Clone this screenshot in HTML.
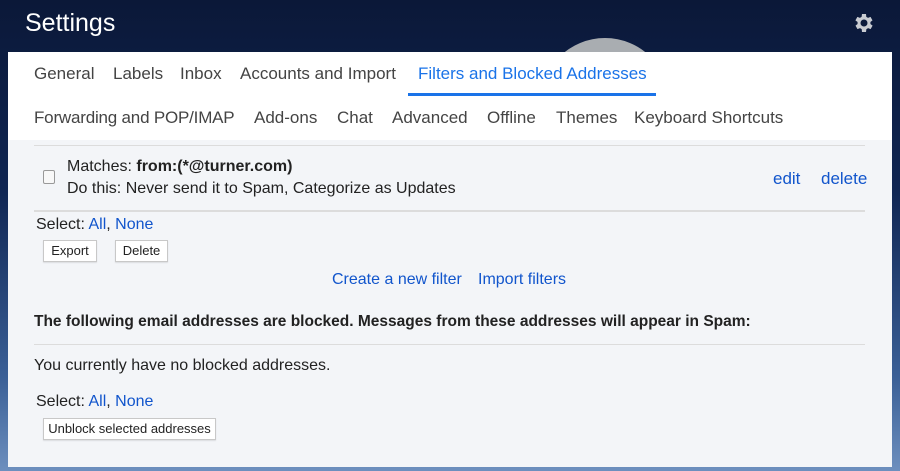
<!DOCTYPE html>
<html><head><meta charset="utf-8"><style>
*{margin:0;padding:0;box-sizing:border-box}
body{width:900px;height:471px;overflow:hidden;position:relative;font-family:"Liberation Sans",sans-serif;
background:linear-gradient(180deg,#0b1838 0%,#0f2552 40%,#3a5f96 80%,#6d8fbe 100%);}
.title{position:absolute;left:25px;top:9px;color:#fff;font-size:25px;}
.moon{position:absolute;left:540px;top:38px;width:130px;height:130px;border-radius:50%;background:#a9adb1;}
.gear{position:absolute;left:851px;top:11px;}
.panel{position:absolute;left:8px;top:52px;width:884px;height:415px;background:#f3f5f8;}
.tabs{position:absolute;left:0;top:0;width:884px;height:88px;background:#fff;}
.t{position:absolute;font-size:17px;color:#444;white-space:nowrap}
.blue{color:#1a73e8}
.line{position:absolute;height:1px;background:#dcdcdc;left:26px;width:831px}
.btn{position:absolute;border:1px solid #c8c8c8;background:#fff;font-size:13px;color:#222;text-align:center;line-height:20px;height:22px;box-shadow:0 1px 1px rgba(0,0,0,.1)}
.s{position:absolute;font-size:16px;color:#222;white-space:nowrap}
.lk,.s.lk{color:#1155cc}
</style></head><body>
<div class="title">Settings</div>
<div class="moon"></div>
<svg class="gear" width="24" height="24" viewBox="0 0 24 24"><path fill="#c9ccd2" d="M19.4 13a7.5 7.5 0 0 0 0-2l2.1-1.6-2-3.5-2.5 1a7.6 7.6 0 0 0-1.7-1L15 3h-4l-.4 2.9a7.6 7.6 0 0 0-1.7 1l-2.5-1-2 3.5L6.6 11a7.5 7.5 0 0 0 0 2l-2.1 1.6 2 3.5 2.5-1a7.6 7.6 0 0 0 1.7 1L11 21h4l.4-2.9a7.6 7.6 0 0 0 1.7-1l2.5 1 2-3.5zM13 15.5a3.5 3.5 0 1 1 0-7 3.5 3.5 0 0 1 0 7z"/></svg>
<div class="panel">
 <div class="tabs">
  <div class="t" style="left:26px;top:12px">General</div>
  <div class="t" style="left:105px;top:12px">Labels</div>
  <div class="t" style="left:172px;top:12px">Inbox</div>
  <div class="t" style="left:232px;top:12px">Accounts and Import</div>
  <div class="t blue" style="left:410px;top:12px">Filters and Blocked Addresses</div>
  <div style="position:absolute;left:400px;top:41px;width:248px;height:3px;background:#1a73e8"></div>
  <div class="t" style="left:26px;top:56px;letter-spacing:-0.2px">Forwarding and POP/IMAP</div>
  <div class="t" style="left:246px;top:56px">Add-ons</div>
  <div class="t" style="left:329px;top:56px">Chat</div>
  <div class="t" style="left:384px;top:56px">Advanced</div>
  <div class="t" style="left:479px;top:56px">Offline</div>
  <div class="t" style="left:548px;top:56px">Themes</div>
  <div class="t" style="left:626px;top:56px">Keyboard Shortcuts</div>
 </div>
 <div class="line" style="top:93px"></div>
 <div style="position:absolute;left:35px;top:118px;width:12px;height:14px;border:1px solid #999;border-radius:2px;background:#f8f8f8"></div>
 <div class="s" style="left:59px;top:106px">Matches: <b>from:(*@turner.com)</b></div>
 <div class="s" style="left:59px;top:128px">Do this: Never send it to Spam, Categorize as Updates</div>
 <div class="s lk" style="left:765px;top:117px;font-size:17px">edit</div>
 <div class="s lk" style="left:813px;top:117px;font-size:17px">delete</div>
 <div class="line" style="top:158px;height:2px"></div>
 <div class="s" style="left:28px;top:164px">Select: <span class="lk">All</span>, <span class="lk">None</span></div>
 <div class="btn" style="left:35px;top:188px;width:54px">Export</div>
 <div class="btn" style="left:107px;top:188px;width:53px">Delete</div>
 <div class="s lk" style="left:324px;top:219px">Create a new filter</div>
 <div class="s lk" style="left:470px;top:219px">Import filters</div>
 <div class="s" style="left:26px;top:261px;font-weight:bold;font-size:15.5px">The following email addresses are blocked. Messages from these addresses will appear in Spam:</div>
 <div class="line" style="top:292px"></div>
 <div class="s" style="left:26px;top:305px">You currently have no blocked addresses.</div>
 <div class="s" style="left:28px;top:341px">Select: <span class="lk">All</span>, <span class="lk">None</span></div>
 <div class="btn" style="left:35px;top:366px;width:173px">Unblock selected addresses</div>
</div>
</body></html>
